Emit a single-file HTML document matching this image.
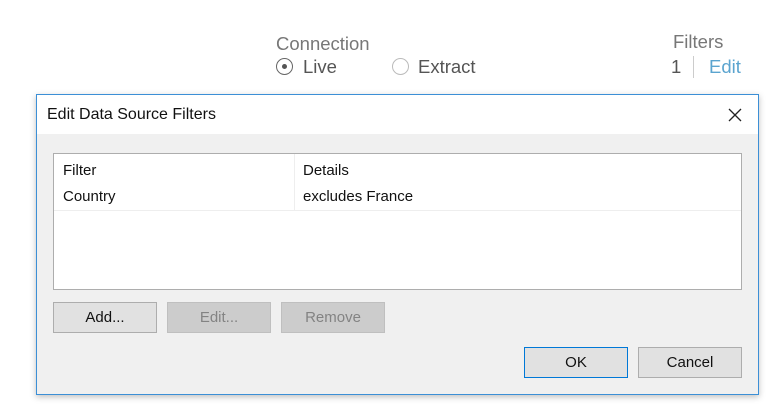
<!DOCTYPE html>
<html><head><style>
body{margin:0;width:768px;height:415px;background:#fff;position:relative;overflow:hidden;font-family:"Liberation Sans",sans-serif;}
.a{position:absolute;white-space:nowrap;}
.top{color:#777;font-size:18.5px;}
.dk{color:#555;font-size:18.5px;}
.radio{position:absolute;width:17px;height:17px;border-radius:50%;border:1.5px solid #bbb;box-sizing:border-box;}
.dlg{position:absolute;left:36px;top:94px;width:723px;height:301px;border:1px solid #3c8fd6;box-sizing:border-box;background:#f0f0f0;box-shadow:0 2px 6px rgba(0,0,0,.25);}
.tb{position:absolute;left:0;top:0;right:0;height:39px;background:#fff;}
.t{font-size:15px;color:#111;}
.btn{position:absolute;width:104px;height:31px;box-sizing:border-box;border:1px solid #adadad;background:#e1e1e1;text-align:center;line-height:29px;font-size:15px;color:#111;}
.dis{background:#cccccc;border-color:#bfbfbf;color:#838383;}
</style></head><body>
<div class="a top" style="left:276px;top:33px;">Connection</div>
<div class="radio" style="left:276px;top:58px;border-color:#666;"><div style="position:absolute;left:4.5px;top:4.5px;width:5px;height:5px;border-radius:50%;background:#555;"></div></div>
<div class="a dk" style="left:303px;top:56px;">Live</div>
<div class="radio" style="left:392px;top:58px;"></div>
<div class="a dk" style="left:418px;top:56px;">Extract</div>
<div class="a top" style="left:673px;top:31px;">Filters</div>
<div class="a dk" style="left:671px;top:56px;">1</div>
<div class="a" style="left:693px;top:56px;width:1px;height:22px;background:#ccc;"></div>
<div class="a" style="left:709px;top:56px;font-size:18.5px;color:#5ba4cf;">Edit</div>
<div class="dlg">
 <div class="tb"></div>
 <div class="a" style="left:10px;top:11px;font-size:16px;color:#111;">Edit Data Source Filters</div>
 <svg class="a" style="left:691px;top:13px" width="14" height="14"><path d="M1 1L13 13M13 1L1 13" stroke="#222" stroke-width="1.3"/></svg>
 <div class="a" style="left:16px;top:58px;width:689px;height:137px;background:#fff;border:1px solid #adadad;box-sizing:border-box;">
  <div class="a" style="left:240px;top:0;width:1px;height:56px;background:#eee;"></div>
  <div class="a" style="left:0;top:56px;width:100%;height:1px;background:#eee;"></div>
  <div class="a t" style="left:9px;top:8px;">Filter</div>
  <div class="a t" style="left:249px;top:8px;">Details</div>
  <div class="a t" style="left:9px;top:34px;">Country</div>
  <div class="a t" style="left:249px;top:34px;">excludes France</div>
 </div>
 <div class="btn" style="left:16px;top:207px;">Add...</div>
 <div class="btn dis" style="left:130px;top:207px;">Edit...</div>
 <div class="btn dis" style="left:244px;top:207px;">Remove</div>
 <div class="btn" style="left:487px;top:252px;border:1px solid #0078d7;">OK</div>
 <div class="btn" style="left:601px;top:252px;">Cancel</div>
</div>
</body></html>
